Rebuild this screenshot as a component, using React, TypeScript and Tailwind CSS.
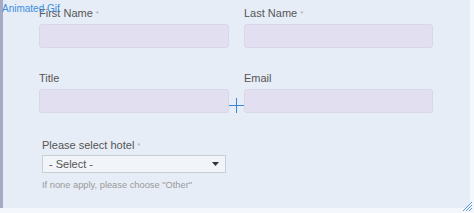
import React from 'react'

const font = { fontFamily: '"Liberation Sans", Arial, sans-serif' }

function Label({ text, required }: { text: string; required?: boolean }) {
  return (
    <div className="text-[11px] leading-[13px] text-[#555] h-[13px]">
      {text}
      {required && <span className="text-[#aaa] text-[8px] align-top ml-[3px]">*</span>}
    </div>
  )
}

function Field({ label, required }: { label: string; required?: boolean }) {
  return (
    <div className="flex flex-col gap-[4px]">
      <Label text={label} required={required} />
      <div className="h-[24px] rounded-[3px] bg-[#e1dff0] border border-[#d8d6e8]" />
    </div>
  )
}

export default function App() {
  return (
    <div className="relative w-[474px] h-[213px] bg-[#f4f7fb] overflow-hidden" style={font}>
      <div className="absolute left-0 top-0 bottom-[5px] right-[4px] bg-[#e7edf6] border-l-[3px] border-[#a4abc2]">
        <div className="pt-[7px] pl-[36px] w-[433px]">
          <div className="grid grid-cols-[190px_189px] gap-x-[15px] gap-y-[24px]">
            <Field label="First Name" required />
            <Field label="Last Name" required />
            <Field label="Title" />
            <Field label="Email" />
          </div>
          <div className="pl-[3px] pt-[26px]">
            <Label text="Please select hotel" required />
            <div className="mt-[3px] w-[184px] h-[18px] bg-[#f1f4f9] border border-[#c9cdd6] flex items-center justify-between px-[6px]">
              <span className="text-[11px] text-[#555]">- Select -</span>
              <svg width="7" height="4" viewBox="0 0 7 4"><path d="M0 0h7L3.5 4z" fill="#333" /></svg>
            </div>
            <div className="mt-[6px] text-[9.3px] text-[#999]">If none apply, please choose "Other"</div>
          </div>
        </div>
      </div>
      <div className="absolute left-[2px] top-[1px] text-[10px] text-[#3b8de0]">Animated Gif</div>
      <svg className="absolute left-[229px] top-[98px]" width="15" height="15" viewBox="0 0 15 15">
        <path d="M7.5 0v15M0 7.5h15" stroke="#3a86d6" strokeWidth="1" />
      </svg>
      <svg className="absolute right-[2px] bottom-[2px]" width="10" height="10" viewBox="0 0 10 10">
        <path d="M10 1L1 10M10 4L4 10M10 7L7 10" stroke="#5b9be0" strokeWidth="1" />
      </svg>
    </div>
  )
}
